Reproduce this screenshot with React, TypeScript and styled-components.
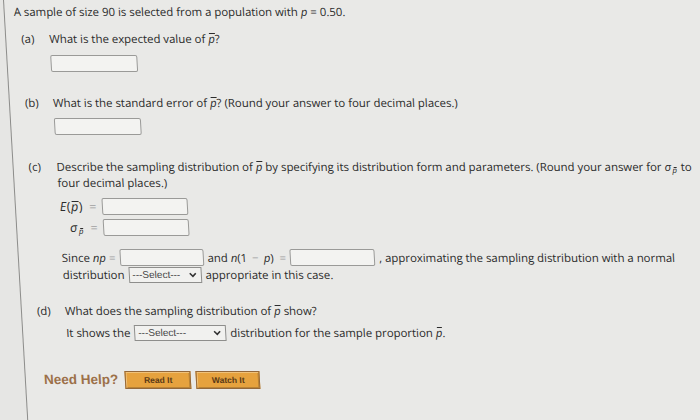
import React from "react";
import styled, { createGlobalStyle } from "styled-components";

const Global = createGlobalStyle`
  html, body { margin: 0; padding: 0; background: #e6e6e4; }
  body { width: 700px; height: 420px; overflow: hidden; }
`;

const Sheet = styled.div`
  box-sizing: border-box;
  height: 420px;
  margin-left: 3px;
  border-left: 1px solid #8c8c8a;
  padding: 4px 0 0 9px;
  background: #e9e9e7;
  transform: skewX(3.3deg);
  transform-origin: 0 0;
  font-family: "Open Sans", "DejaVu Sans", sans-serif;
  font-size: 11.4px;
  line-height: 16px;
  color: #2c2c2c;
`;

const Intro = styled.div``;

const Part = styled.div<{ $top: number }>`
  display: grid;
  grid-template-columns: 28px 1fr;
  margin-top: ${(p) => p.$top}px;
  margin-left: 6px;
`;

const Label = styled.div``;

const Body = styled.div`
  display: flex;
  flex-direction: column;
`;

const Question = styled.div`
  padding-right: 6px;
`;

const Input = styled.div<{ $w: number }>`
  box-sizing: border-box;
  width: ${(p) => p.$w}px;
  height: 17px;
  border: 1px solid #9a9a98;
  border-radius: 2px;
  background: #f3f3f1;
  display: inline-block;
  vertical-align: middle;
  flex: none;
`;

const Answer = styled.div<{ $top: number }>`
  margin-top: ${(p) => p.$top}px;
  line-height: 0;
`;

const EqGrid = styled.div`
  display: grid;
  grid-template-columns: 38px 86px;
  column-gap: 5px;
  row-gap: 4px;
  margin-top: 7px;
  align-items: center;
`;

const EqLabel = styled.div`
  text-align: right;
  white-space: nowrap;
  font-size: 12.5px;
  letter-spacing: 0.6px;
`;

const Eq = styled.span<{ $gap?: number }>`
  color: #a0a0a0;
  margin-left: ${(p) => p.$gap ?? 0}px;
`;

const Minus = styled.span`
  color: #a0a0a0;
  margin: 0 5px;
`;

const Line = styled.div<{ $top?: number }>`
  display: flex;
  align-items: center;
  gap: 4px;
  white-space: nowrap;
  margin-top: ${(p) => p.$top ?? 0}px;
  height: 17px;
`;

const I = styled.i`
  font-style: italic;
`;

const Bar = styled.span`
  font-style: italic;
  display: inline-block;
  position: relative;
  &::before {
    content: "";
    position: absolute;
    left: 1px;
    right: 0;
    top: 2px;
    border-top: 1px solid currentColor;
  }
`;

const Sigma = styled.span`
  font-style: italic;
  display: inline-flex;
  align-items: flex-start;
  margin-right: 1px;
`;

const Sub = styled.span`
  font-size: 8px;
  line-height: 10px;
  position: relative;
  top: 6px;
  margin-left: 1px;
  letter-spacing: 0;
`;

const Select = styled.div<{ $w: number }>`
  box-sizing: border-box;
  width: ${(p) => p.$w}px;
  height: 16px;
  border: 1px solid #8e8e8c;
  background: #f1f1ef;
  display: flex;
  align-items: center;
  justify-content: space-between;
  padding: 0 4px 0 3px;
  font-family: "Liberation Sans", Arial, sans-serif;
  font-size: 10px;
  color: #444;
  flex: none;
`;

const Chevron = () => (
  <svg width="8" height="6" viewBox="0 0 8 6">
    <path d="M1 1.2 L4 4.3 L7 1.2" fill="none" stroke="#333" strokeWidth="1.6" />
  </svg>
);

const Help = styled.div`
  display: flex;
  align-items: center;
  margin-top: 30px;
  margin-left: 9px;
  gap: 5px;
`;

const HelpText = styled.span`
  font-family: "Liberation Sans", Arial, sans-serif;
  font-weight: bold;
  font-size: 13.5px;
  color: #9c7049;
  margin-right: 2px;
`;

const Btn = styled.div<{ $w: number }>`
  box-sizing: border-box;
  width: ${(p) => p.$w}px;
  height: 18px;
  background: #e6a23e;
  border: 1px solid #94683a;
  box-shadow: inset 1px 1px 0 #f0c27a, inset -1px -1px 0 #b98335;
  display: flex;
  align-items: center;
  justify-content: center;
  font-family: "Liberation Sans", Arial, sans-serif;
  font-weight: bold;
  font-size: 8.5px;
  color: #5b3a17;
`;

const P = () => <Bar>p</Bar>;
const SigmaP = () => (
  <Sigma>
    σ
    <Sub>
      <Bar>p</Bar>
    </Sub>
  </Sigma>
);

export default function App() {
  return (
    <>
      <Global />
      <Sheet>
        <Intro>
          A sample of size 90 is selected from a population with <I>p</I> = 0.50.
        </Intro>

        <Part $top={11}>
          <Label>(a)</Label>
          <Body>
            <Question>
              What is the expected value of <P />?
            </Question>
            <Answer $top={8}>
              <Input $w={87} />
            </Answer>
          </Body>
        </Part>

        <Part $top={23}>
          <Label>(b)</Label>
          <Body>
            <Question>
              What is the standard error of <P />? (Round your answer to four decimal places.)
            </Question>
            <Answer $top={7}>
              <Input $w={87} />
            </Answer>
          </Body>
        </Part>

        <Part $top={24}>
          <Label>(c)</Label>
          <Body>
            <Question>
              Describe the sampling distribution of <P /> by specifying its distribution form and parameters. (Round
              your answer for <SigmaP /> to four decimal places.)
            </Question>
            <EqGrid>
              <EqLabel>
                <I>E</I>(<P />)<Eq $gap={6}>=</Eq>
              </EqLabel>
              <Input $w={86} />
              <EqLabel>
                <SigmaP />
                <Eq $gap={6}>=</Eq>
              </EqLabel>
              <Input $w={86} />
            </EqGrid>
            <Line $top={13}>
              <span>
                Since <I>np</I> <Eq>=</Eq>
              </span>
              <Input $w={84} />
              <span>
                and <I>n</I>(1<Minus>−</Minus><I>p</I>) <Eq $gap={3}>=</Eq>
              </span>
              <Input $w={85} />
              <span>, approximating the sampling distribution with a normal</span>
            </Line>
            <Line>
              <span>distribution</span>
              <Select $w={73}>
                <span>---Select---</span>
                <Chevron />
              </Select>
              <span>appropriate in this case.</span>
            </Line>
          </Body>
        </Part>

        <Part $top={20}>
          <Label>(d)</Label>
          <Body>
            <Question>
              What does the sampling distribution of <P /> show?
            </Question>
            <Line $top={5}>
              <span>It shows the</span>
              <Select $w={92}>
                <span>---Select---</span>
                <Chevron />
              </Select>
              <span>
                distribution for the sample proportion <P />.
              </span>
            </Line>
          </Body>
        </Part>

        <Help>
          <HelpText>Need Help?</HelpText>
          <Btn $w={66}>Read It</Btn>
          <Btn $w={64}>Watch It</Btn>
        </Help>
      </Sheet>
    </>
  );
}
